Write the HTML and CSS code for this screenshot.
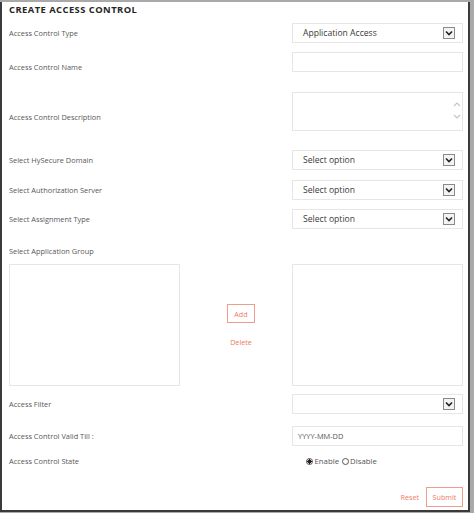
FILE: index.html
```html
<!DOCTYPE html>
<html>
<head>
<meta charset="utf-8">
<link rel="stylesheet" href="styles.css">
</head>
<body>
<div class="panel">
  <h1 class="title">CREATE ACCESS CONTROL</h1>

  <div class="row r1">
    <div class="label">Access Control Type</div>
    <div class="field select"><span class="val">Application Access</span>
      <svg class="dd" viewBox="0 0 12 12" width="12" height="12"><rect x="0.5" y="0.5" width="11" height="11" fill="#f3f3f3" stroke="#8a8a8a"/><path d="M3 4.5 L6 7.5 L9 4.5" fill="none" stroke="#222" stroke-width="1.6"/></svg>
    </div>
  </div>

  <div class="row r2">
    <div class="label lower">Access Control Name</div>
    <div class="field"></div>
  </div>

  <div class="row r3">
    <div class="label lower">Access Control Description</div>
    <div class="field area">
      <div class="scroll">
        <svg viewBox="0 0 8 6" width="8" height="6"><path d="M1 5 L4 2 L7 5" fill="none" stroke="#c4c4c4" stroke-width="1.1"/></svg>
        <svg viewBox="0 0 8 6" width="8" height="6"><path d="M1 1 L4 4 L7 1" fill="none" stroke="#c4c4c4" stroke-width="1.1"/></svg>
      </div>
    </div>
  </div>

  <div class="row r4">
    <div class="label">Select HySecure Domain</div>
    <div class="field select"><span class="val">Select option</span>
      <svg class="dd" viewBox="0 0 12 12" width="12" height="12"><rect x="0.5" y="0.5" width="11" height="11" fill="#f3f3f3" stroke="#8a8a8a"/><path d="M3 4.5 L6 7.5 L9 4.5" fill="none" stroke="#222" stroke-width="1.6"/></svg>
    </div>
  </div>

  <div class="row r5">
    <div class="label">Select Authorization Server</div>
    <div class="field select"><span class="val">Select option</span>
      <svg class="dd" viewBox="0 0 12 12" width="12" height="12"><rect x="0.5" y="0.5" width="11" height="11" fill="#f3f3f3" stroke="#8a8a8a"/><path d="M3 4.5 L6 7.5 L9 4.5" fill="none" stroke="#222" stroke-width="1.6"/></svg>
    </div>
  </div>

  <div class="row r6">
    <div class="label">Select Assignment Type</div>
    <div class="field select"><span class="val">Select option</span>
      <svg class="dd" viewBox="0 0 12 12" width="12" height="12"><rect x="0.5" y="0.5" width="11" height="11" fill="#f3f3f3" stroke="#8a8a8a"/><path d="M3 4.5 L6 7.5 L9 4.5" fill="none" stroke="#222" stroke-width="1.6"/></svg>
    </div>
  </div>

  <div class="row r7 short">
    <div class="label">Select Application Group</div>
  </div>

  <div class="lists">
    <div class="listbox"></div>
    <div class="mid">
      <button class="btn add">Add</button>
      <span class="link del">Delete</span>
    </div>
    <div class="listbox"></div>
  </div>

  <div class="row r8">
    <div class="label">Access Filter</div>
    <div class="field select"><span class="val"></span>
      <svg class="dd" viewBox="0 0 12 12" width="12" height="12"><rect x="0.5" y="0.5" width="11" height="11" fill="#f3f3f3" stroke="#8a8a8a"/><path d="M3 4.5 L6 7.5 L9 4.5" fill="none" stroke="#222" stroke-width="1.6"/></svg>
    </div>
  </div>

  <div class="row r9">
    <div class="label">Access Control Valid Till :</div>
    <div class="field date"><span class="ph">YYYY-MM-DD</span></div>
  </div>

  <div class="row r10 short">
    <div class="label">Access Control State</div>
    <div class="radios">
      <span class="radio on"></span><span class="rtext">Enable</span>
      <span class="radio"></span><span class="rtext">Disable</span>
    </div>
  </div>

  <div class="actions">
    <span class="link reset">Reset</span>
    <button class="btn submit">Submit</button>
  </div>
</div>
</body>
</html>
```

FILE: styles.css
```css
html, body {
  margin: 0;
  padding: 0;
}
body {
  width: 474px;
  height: 513px;
  background: #a9a9a9;
  overflow: hidden;
  font-family: "Open Sans", "Noto Sans", sans-serif;
}
.panel {
  box-sizing: border-box;
  width: 470px;
  height: 510px;
  margin-top: 2px;
  background: #ffffff;
  border-left: 2px solid #3a3a3a;
  border-right: 2px solid #3a3a3a;
  border-bottom: 2px solid #3a3a3a;
  padding: 0 5px 0 7px;
  display: flex;
  flex-direction: column;
}
.title {
  margin: 0;
  padding-left: 0;
  height: 16px;
  line-height: 16px;
  font-size: 9.4px;
  font-weight: 700;
  letter-spacing: 0.45px;
  color: #262626;
}
.row {
  display: flex;
  align-items: center;
  height: 20px;
}
.row.short { height: 14px; }
.label {
  flex: 1;
  font-size: 7.4px;
  color: #585858;
  white-space: nowrap;
}
.label.lower { position: relative; top: 5px; }
.field {
  box-sizing: border-box;
  width: 171px;
  height: 20px;
  border: 1px solid #e6e6e6;
  background: #fff;
  display: flex;
  align-items: center;
}
.select { padding: 0 7px 0 10px; justify-content: space-between; }
.val {
  font-size: 8.6px;
  color: #3a3a3a;
}
.area {
  height: 39px;
  justify-content: flex-end;
  align-items: flex-start;
}
.scroll {
  display: flex;
  flex-direction: column;
  gap: 7px;
  padding: 8px 1px 0 0;
}
.scroll svg { display: block; }
.date { padding-left: 5px; }
.ph { font-size: 7.4px; color: #555; }

.r1 { margin-top: 5px; }
.r2 { margin-top: 9px; }
.r3 { margin-top: 20px; height: 39px; }
.r4 { margin-top: 19px; }
.r5 { margin-top: 10px; }
.r6 { margin-top: 9px; }
.r7 { margin-top: 15px; }
.r8 { margin-top: 8px; }
.r9 { margin-top: 12px; }
.r10 { margin-top: 8px; }

.lists {
  display: flex;
  margin-top: 6px;
  height: 122px;
}
.listbox {
  box-sizing: border-box;
  width: 171px;
  height: 122px;
  border: 1px solid #e6e6e6;
}
.mid {
  flex: 1;
  display: flex;
  flex-direction: column;
  align-items: center;
  padding: 40px 0 0 10px;
}
.btn {
  box-sizing: border-box;
  background: #fff;
  border: 1px solid #f19c8c;
  color: #ef7a64;
  font-family: inherit;
  font-size: 7.2px;
  padding: 0;
  margin: 0;
}
.add { width: 28px; height: 19px; }
.link {
  font-size: 7.2px;
  color: #ef7a64;
}
.del { margin-top: 14px; }

.radios {
  box-sizing: border-box;
  width: 171px;
  display: flex;
  align-items: center;
  padding-left: 14px;
  font-size: 7.8px;
  color: #555;
}
.radio {
  box-sizing: border-box;
  width: 7px;
  height: 7px;
  border-radius: 50%;
  border: 1px solid #555;
  background: #fff;
  margin-right: 1.5px;
}
.radio.on {
  background: radial-gradient(circle, #222 0 2px, #fff 2.2px);
}
.rtext { margin-right: 2.5px; }

.actions {
  display: flex;
  justify-content: flex-end;
  align-items: center;
  margin-top: 19px;
  gap: 7px;
}
.submit { width: 37px; height: 20px; }
```
